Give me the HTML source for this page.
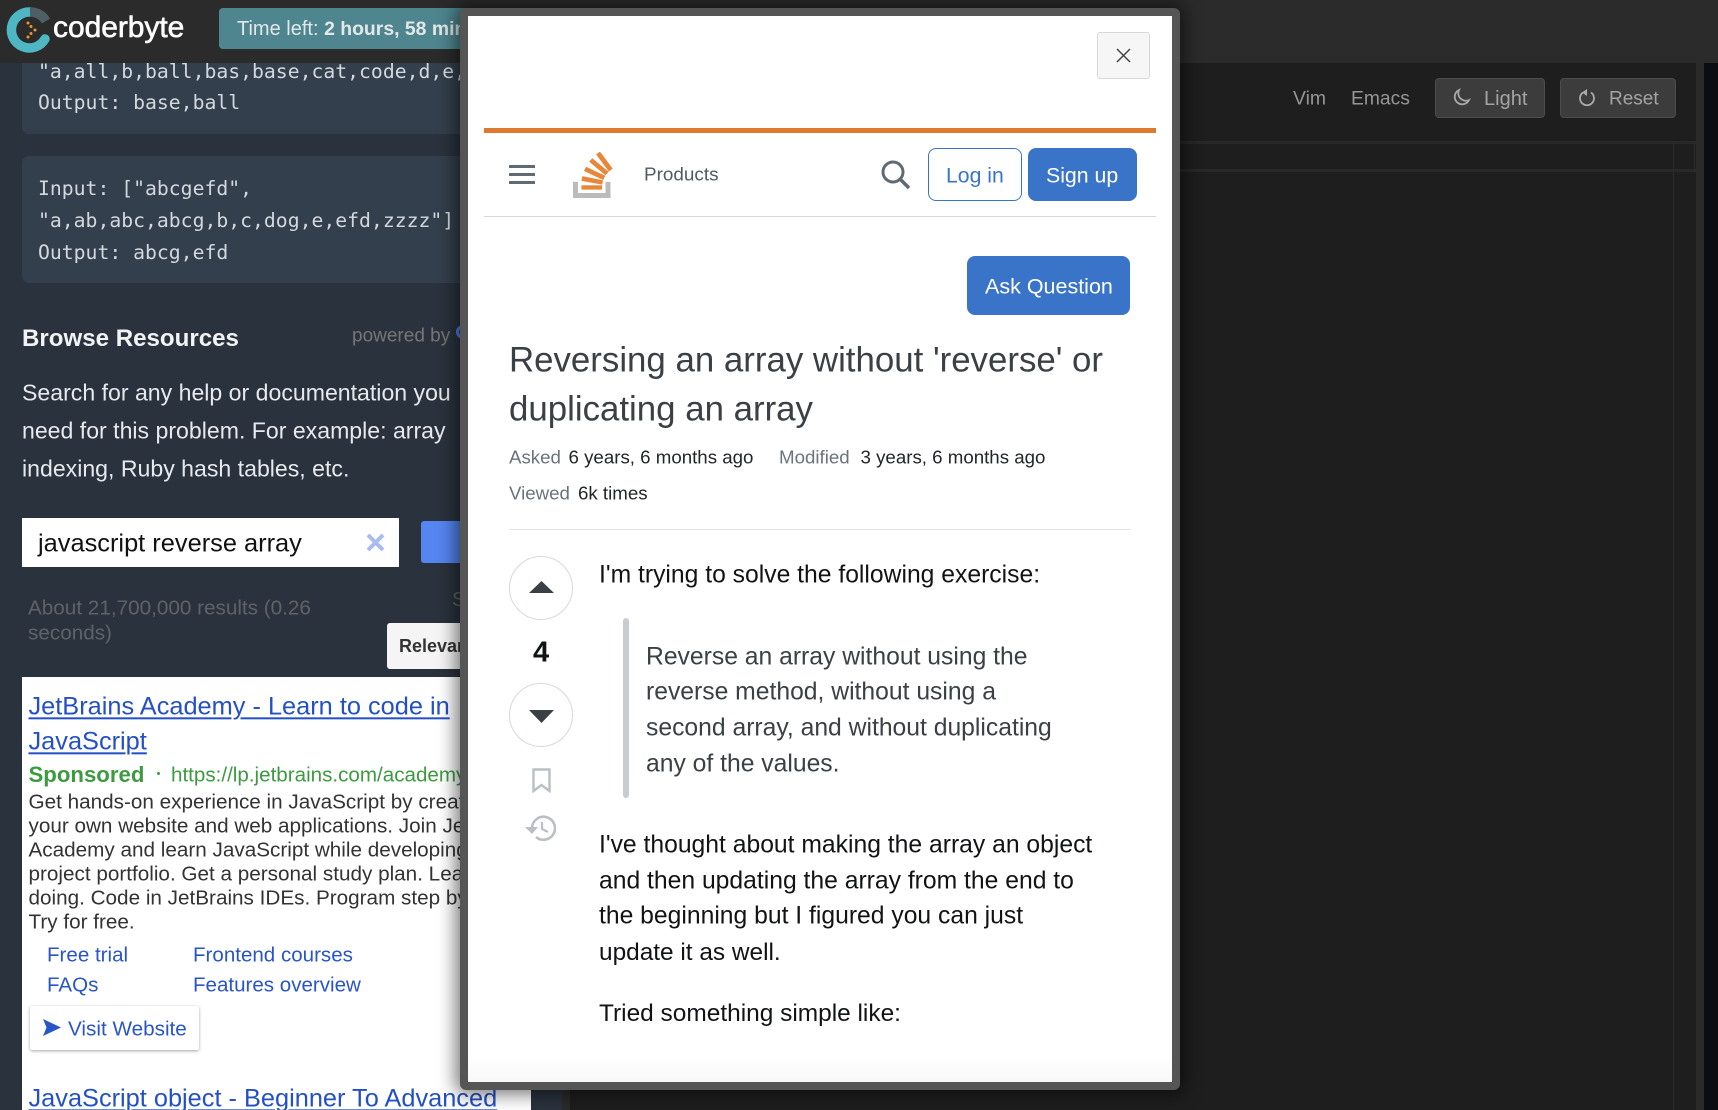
<!DOCTYPE html>
<html><head><meta charset="utf-8"><title>coderbyte</title>
<style>
html,body{margin:0;padding:0;background:#1e1e1e}
#p{position:relative;width:1718px;height:1110px;overflow:hidden;background:#1e1e1e;font-family:"Liberation Sans",sans-serif}
.a{position:absolute}
.t{position:absolute;white-space:nowrap;line-height:1;transform:translateY(-50%)}
.m{font-family:"DejaVu Sans Mono",monospace;font-size:19.75px;color:#d3d8de}
.s{font-size:23.1px;color:#e6e9ee}
.r{font-size:20.7px;color:#333}
.l{font-size:20.55px;color:#2a55c8}
.h{font-size:25.35px;color:#2350c6;text-decoration:underline;text-decoration-thickness:1.5px;text-underline-offset:3px}
.b{font-size:24.7px;color:#111315}
.q{font-size:24.7px;color:#3b4045}
.g{font-size:18.7px;color:#6a737c}
.d{font-size:18.7px;color:#232629}
</style></head><body><div id="p">

<!-- left panel -->
<div class="a" style="left:0;top:0;width:562px;height:1110px;background:#2a323d"></div>
<div class="a" style="left:562px;top:0;width:8px;height:1110px;background:#2b2b2b"></div>
<div class="a" style="left:22px;top:40px;width:540px;height:94px;background:#333f4c;border-radius:7px"></div>
<div class="a" style="left:22px;top:156px;width:540px;height:127px;background:#333f4c;border-radius:7px"></div>
<div class="t m" style="left:38px;top:72px">"a,all,b,ball,bas,base,cat,code,d,e,</div>
<div class="t m" style="left:38px;top:103px">Output: base,ball</div>
<div class="t m" style="left:38px;top:189px">Input: ["abcgefd",</div>
<div class="t m" style="left:38px;top:221px">"a,ab,abc,abcg,b,c,dog,e,efd,zzzz"]</div>
<div class="t m" style="left:38px;top:253px">Output: abcg,efd</div>

<div class="t" style="left:22px;top:339px;font-size:24.1px;font-weight:bold;color:#f1f3f5">Browse Resources</div>
<div class="t" style="left:352px;top:336px;font-size:19px;color:#767676">powered by</div>
<div class="a" style="left:456px;top:325px;width:14px;height:14px;box-sizing:border-box;border:3px solid #4f80e8;border-radius:50%"></div>
<div class="t s" style="left:22px;top:393px">Search for any help or documentation you</div>
<div class="t s" style="left:22px;top:431px">need for this problem. For example: array</div>
<div class="t s" style="left:22px;top:469px">indexing, Ruby hash tables, etc.</div>

<div class="a" style="left:22px;top:518px;width:377px;height:49px;background:#fff"></div>
<div class="t" style="left:38px;top:543.5px;font-size:25.4px;color:#111">javascript reverse array</div>
<svg class="a" style="left:366px;top:533px" width="19" height="19" viewBox="0 0 19 19"><path d="M2 2L17 17M17 2L2 17" stroke="#a9bbef" stroke-width="4"/></svg>
<div class="a" style="left:421px;top:521px;width:50px;height:42px;background:#5585f0;border-radius:3px"></div>
<div class="t" style="left:28px;top:609px;font-size:20.7px;color:#5f6368">About 21,700,000 results (0.26</div>
<div class="t" style="left:28px;top:633.5px;font-size:20.7px;color:#5f6368">seconds)</div>
<div class="t" style="left:452px;top:600px;font-size:20.5px;color:#5f6368">S</div>
<div class="a" style="left:387px;top:623px;width:90px;height:46px;background:#f5f5f5;border-radius:3px"></div>
<div class="t" style="left:399px;top:646px;font-size:18px;font-weight:bold;color:#333">Relevance</div>

<div class="a" style="left:22px;top:677px;width:509px;height:433px;background:#fff"></div>
<div class="t h" style="left:28.5px;top:707px">JetBrains Academy - Learn to code in</div>
<div class="t h" style="left:28.5px;top:742px">JavaScript</div>
<div class="t" style="left:28.5px;top:775px;font-size:22.2px;font-weight:bold;color:#3d9a40">Sponsored</div>
<div class="a" style="left:157px;top:772px;width:3px;height:3px;background:#3d9a40;border-radius:50%"></div>
<div class="t" style="left:171px;top:775.5px;font-size:20.6px;color:#3d9a40">https://lp.jetbrains.com/academy</div>
<div class="t r" style="left:28.5px;top:803px">Get hands-on experience in JavaScript by creating</div>
<div class="t r" style="left:28.5px;top:827px">your own website and web applications. Join JetBrains</div>
<div class="t r" style="left:28.5px;top:851px">Academy and learn JavaScript while developing</div>
<div class="t r" style="left:28.5px;top:875px">project portfolio. Get a personal study plan. Learn by</div>
<div class="t r" style="left:28.5px;top:899px">doing. Code in JetBrains IDEs. Program step by step.</div>
<div class="t r" style="left:28.5px;top:923px">Try for free.</div>
<div class="t l" style="left:47px;top:956px">Free trial</div>
<div class="t l" style="left:193px;top:956px">Frontend courses</div>
<div class="t l" style="left:47px;top:986px">FAQs</div>
<div class="t l" style="left:193px;top:986px">Features overview</div>
<div class="a" style="left:30px;top:1006px;width:169px;height:44px;background:#fff;border-radius:2px;box-shadow:0 1px 3px rgba(0,0,0,.35)"></div>
<svg class="a" style="left:43px;top:1019px" width="18" height="17" viewBox="0 0 18 17"><path d="M0 0L18 8.5L0 17L3.5 8.5Z" fill="#2a55c8"/></svg>
<div class="t l" style="left:68px;top:1030px;font-size:20.7px">Visit Website</div>
<div class="t h" style="left:28.5px;top:1099px">JavaScript object - Beginner To Advanced</div>

<!-- top bar -->
<div class="a" style="left:0;top:0;width:1718px;height:63px;background:#2b2b2b"></div>
<svg class="a" style="left:2px;top:0" width="60" height="60" viewBox="0 0 60 60">
<path d="M28 12A18 18 0 1 0 43 39" fill="none" stroke="#4fb6c3" stroke-width="9.5" stroke-linecap="round"/>
<path d="M28 12A18 18 0 0 1 44 21" fill="none" stroke="#4d5f65" stroke-width="9.5"/>
<g fill="#e89a33"><circle cx="26" cy="23" r="1.5"/><circle cx="29" cy="26.5" r="1.5"/><circle cx="33" cy="30" r="1.5"/><circle cx="29" cy="33.5" r="1.5"/><circle cx="26" cy="37" r="1.5"/></g></svg>
<div class="t" style="left:53px;top:28px;font-size:30px;letter-spacing:-.05px;color:#fff;-webkit-text-stroke:.6px #fff">coderbyte</div>
<div class="a" style="left:219px;top:8px;width:260px;height:41px;background:#4e858f;border-radius:4px"></div>
<div class="t" style="left:237px;top:28.5px;font-size:20px;color:#e3e8e9">Time left: <b style="font-size:19.4px">2 hours, 58 min</b></div>

<!-- editor -->
<div class="a" style="left:1696px;top:63px;width:8px;height:1047px;background:#2a2a2a"></div>
<div class="a" style="left:1704px;top:63px;width:14px;height:1047px;background:#0c0d12"></div>
<div class="a" style="left:570px;top:141px;width:1126px;height:31px;border:solid #282828;border-width:3px 0;box-sizing:border-box"></div>
<div class="a" style="left:1673px;top:141px;width:1px;height:969px;background:#2c2c2c"></div>
<div class="a" style="left:1694px;top:141px;width:1px;height:31px;background:#2c2c2c"></div>
<div class="t" style="left:1293px;top:99px;font-size:19.4px;color:#969696">Vim</div>
<div class="t" style="left:1351px;top:99px;font-size:19.3px;color:#969696">Emacs</div>
<div class="a" style="left:1435px;top:78px;width:110px;height:40px;box-sizing:border-box;background:#3c3c3c;border:1px solid #4c4c4c;border-radius:4px"></div>
<svg class="a" style="left:1452px;top:88px" width="19" height="19" viewBox="0 0 19 19"><path d="M7 2A7.5 7.5 0 1 0 17 12A7.5 7.5 0 0 1 7 2Z" fill="none" stroke="#aaa" stroke-width="1.8"/></svg>
<div class="t" style="left:1484px;top:99px;font-size:20px;color:#a4a4a4">Light</div>
<div class="a" style="left:1560px;top:78px;width:116px;height:40px;box-sizing:border-box;background:#3c3c3c;border:1px solid #4c4c4c;border-radius:4px"></div>
<svg class="a" style="left:1578px;top:88px" width="18" height="20" viewBox="0 0 18 20"><path d="M5 4.5A7 7 0 1 0 13 4.5" fill="none" stroke="#aaa" stroke-width="1.8"/><path d="M9 1V8L4 4.5Z" fill="#aaa"/></svg>
<div class="t" style="left:1609px;top:99px;font-size:19px;color:#a4a4a4">Reset</div>

<!-- modal -->
<div class="a" style="left:460px;top:8px;width:720px;height:1082px;box-sizing:border-box;border:8px solid #555;border-radius:6px;background:linear-gradient(#fff 97.5%,#f8f8f8);box-shadow:0 0 18px 4px rgba(0,0,0,.55)"></div>
<div class="a" style="left:1097px;top:32px;width:53px;height:47px;box-sizing:border-box;background:#f6f6f6;border:1px solid #d8d8d8;border-radius:3px"></div>
<svg class="a" style="left:1116px;top:48px" width="15" height="15" viewBox="0 0 15 15"><path d="M1 1L14 14M14 1L1 14" stroke="#444" stroke-width="1.5"/></svg>
<div class="a" style="left:484px;top:128px;width:672px;height:5px;background:#dd7a30"></div>
<div class="a" style="left:484px;top:216px;width:672px;height:1px;background:#d6d9dc"></div>
<div class="a" style="left:509px;top:165px;width:26px;height:3px;background:#5f6a72"></div>
<div class="a" style="left:509px;top:173px;width:26px;height:3px;background:#5f6a72"></div>
<div class="a" style="left:509px;top:181px;width:26px;height:3px;background:#5f6a72"></div>
<svg class="a" style="left:573px;top:152px" width="40" height="46" viewBox="0 0 32 37" preserveAspectRatio="none"><path d="M26 33v-9h4v13H0V24h4v9h22Z" fill="#bcbbbb"/><path d="m21.5 0-2.7 2 9.9 13.3 2.7-2L21.5 0ZM26 18.4 13.3 7.8l2.1-2.5 12.7 10.6-2.1 2.5ZM9.1 15.2l15 7 1.4-3-15-7-1.4 3Zm14 10.79.68-2.95-16.1-3.35L7 23l16.1 2.99ZM23 30H7v-3h16v3Z" fill="#e8873a" stroke="#e8873a" stroke-width=".5"/></svg>
<div class="t" style="left:644px;top:175.5px;font-size:18.9px;color:#525960">Products</div>
<svg class="a" style="left:881px;top:160px" width="30" height="30" viewBox="0 0 30 30"><circle cx="12" cy="12" r="10" fill="none" stroke="#5f6a72" stroke-width="3"/><path d="M19 19L28 28" stroke="#5f6a72" stroke-width="3.5"/></svg>
<div class="a" style="left:928px;top:148px;width:94px;height:53px;box-sizing:border-box;background:#fff;border:1.5px solid #3a74c9;border-radius:8px"></div>
<div class="t" style="left:946px;top:176px;font-size:21.2px;color:#3a74c9">Log in</div>
<div class="a" style="left:1028px;top:148px;width:109px;height:53px;background:#3a74c9;border-radius:8px"></div>
<div class="t" style="left:1046px;top:176px;font-size:21.3px;color:#fff">Sign up</div>
<div class="a" style="left:967px;top:256px;width:163px;height:59px;background:#3a74c9;border-radius:8px"></div>
<div class="t" style="left:985px;top:287px;font-size:21.5px;color:#fff">Ask Question</div>

<div class="t" style="left:509px;top:361px;font-size:34.85px;color:#3b4045">Reversing an array without 'reverse' or</div>
<div class="t" style="left:509px;top:410px;font-size:34.85px;color:#3b4045">duplicating an array</div>
<div class="t g" style="left:509px;top:458px">Asked</div>
<div class="t d" style="left:568.5px;top:458px">6 years, 6 months ago</div>
<div class="t g" style="left:779px;top:458px">Modified</div>
<div class="t d" style="left:860.5px;top:458px">3 years, 6 months ago</div>
<div class="t g" style="left:509px;top:493.5px">Viewed</div>
<div class="t d" style="left:578px;top:493.5px">6k times</div>
<div class="a" style="left:509px;top:529px;width:622px;height:1px;background:#e3e6e8"></div>

<div class="a" style="left:509px;top:556px;width:64px;height:64px;box-sizing:border-box;border:1px solid #d6d9dc;border-radius:50%"></div>
<svg class="a" style="left:529px;top:581px" width="25" height="12" viewBox="0 0 25 12"><path d="M12.5 0L25 12H0Z" fill="#3b4045"/></svg>
<div class="t" style="left:533px;top:653px;font-size:29px;font-weight:bold;color:#111315">4</div>
<div class="a" style="left:509px;top:683px;width:64px;height:64px;box-sizing:border-box;border:1px solid #d6d9dc;border-radius:50%"></div>
<svg class="a" style="left:529px;top:710px" width="25" height="13" viewBox="0 0 25 13"><path d="M0 0H25L12.5 13Z" fill="#3b4045"/></svg>
<svg class="a" style="left:532px;top:768px" width="19" height="25" viewBox="0 0 19 25"><path d="M1.5 1.5H17.5V23L9.5 17L1.5 23Z" fill="none" stroke="#babfc4" stroke-width="2.4"/></svg>
<svg class="a" style="left:525px;top:814px" width="31" height="28" viewBox="0 0 31 28"><path d="M7 14A11.5 11.5 0 1 1 11 23" fill="none" stroke="#babfc4" stroke-width="2.6"/><path d="M0 13H13L7 20Z" fill="#babfc4"/><path d="M17 8V15L23 18" fill="none" stroke="#babfc4" stroke-width="2.2"/></svg>

<div class="t b" style="left:599px;top:576px">I'm trying to solve the following exercise:</div>
<div class="a" style="left:623px;top:618px;width:6px;height:180px;background:#c8ccd0;border-radius:3px"></div>
<div class="t q" style="left:646px;top:657.5px">Reverse an array without using the</div>
<div class="t q" style="left:646px;top:693px">reverse method, without using a</div>
<div class="t q" style="left:646px;top:729px">second array, and without duplicating</div>
<div class="t q" style="left:646px;top:765px">any of the values.</div>
<div class="t b" style="left:599px;top:846px">I've thought about making the array an object</div>
<div class="t b" style="left:599px;top:882px">and then updating the array from the end to</div>
<div class="t b" style="left:599px;top:917px">the beginning but I figured you can just</div>
<div class="t b" style="left:599px;top:952.5px;font-size:24.4px">update it as well.</div>
<div class="t b" style="left:599px;top:1014px;font-size:24.45px">Tried something simple like:</div>

</div></body></html>
